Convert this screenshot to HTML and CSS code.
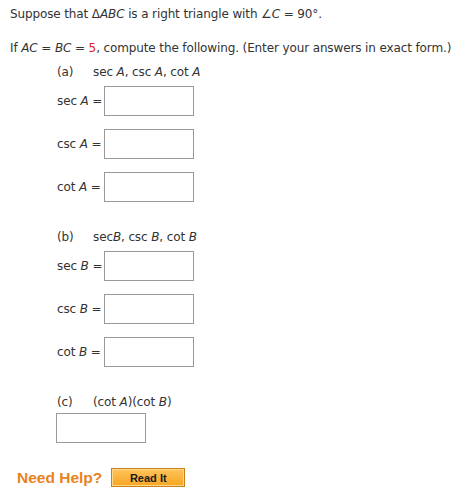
FILE: index.html
```html
<!DOCTYPE html>
<html>
<head>
<meta charset="utf-8">
<link rel="stylesheet" href="styles.css">
</head>
<body>
<div class="page">
  <p class="line first">Suppose that Δ<i>ABC</i> is a right triangle with ∠<i>C</i> = 90°.</p>
  <p class="line second">If <i>AC</i> = <i>BC</i> = <span class="red">5</span>, compute the following. (Enter your answers in exact form.)</p>

  <div class="part">
    <div class="part-head"><span class="tag">(a)</span><span>sec <i>A</i>, csc <i>A</i>, cot <i>A</i></span></div>
    <div class="rows">
      <div class="row"><span class="lbl">sec <i>A</i> =</span><span class="box"></span></div>
      <div class="row"><span class="lbl">csc <i>A</i> =</span><span class="box"></span></div>
      <div class="row"><span class="lbl">cot <i>A</i> =</span><span class="box"></span></div>
    </div>
  </div>

  <div class="part partb">
    <div class="part-head"><span class="tag">(b)</span><span>sec<i>B</i>, csc <i>B</i>, cot <i>B</i></span></div>
    <div class="rows">
      <div class="row"><span class="lbl">sec <i>B</i> =</span><span class="box"></span></div>
      <div class="row"><span class="lbl">csc <i>B</i> =</span><span class="box"></span></div>
      <div class="row"><span class="lbl">cot <i>B</i> =</span><span class="box"></span></div>
    </div>
  </div>

  <div class="part partc">
    <div class="part-head"><span class="tag">(c)</span><span>(cot <i>A</i>)(cot <i>B</i>)</span></div>
    <span class="box boxc"></span>
  </div>

  <div class="help">
    <span class="need">Need Help?</span>
    <span class="btn">Read It</span>
  </div>
</div>
</body>
</html>
```
FILE: styles.css
```css
html, body { margin: 0; padding: 0; background: #fff; }
.page {
  font-family: "DejaVu Sans", Verdana, sans-serif;
  font-size: 12px;
  letter-spacing: -0.12px;
  color: #333;
  padding: 7px 0 0 10px;
}
.line { margin: 0; line-height: 15px; }
.second { margin-top: 19px; }
.red { color: #e0201b; }
.part { margin-left: 47px; }
.part-head { display: flex; line-height: 15px; margin-top: 9px; white-space: nowrap; }
.tag { width: 36px; }
.rows { display: flex; flex-direction: column; gap: 13px; margin-top: 6px; }
.row { display: flex; align-items: center; }
.lbl { width: 47px; flex-shrink: 0; white-space: nowrap; }
.box {
  display: block;
  flex-shrink: 0;
  width: 88px;
  height: 28px;
  border: 1px solid #999;
  background: #fff;
}
.partb .part-head { margin-top: 28px; }
.partb .rows { margin-top: 6px; }
.partc .part-head { margin-top: 28px; }
.boxc { margin-top: 3px; margin-left: -1px; }
.help { display: flex; align-items: center; margin-top: 25px; margin-left: 7px; }
.need {
  font-family: "Liberation Sans", Arial, sans-serif;
  font-weight: bold;
  font-size: 15.5px;
  letter-spacing: 0;
  color: #e8821e;
}
.btn {
  margin-left: 9px;
  width: 72px;
  height: 17px;
  border: 1px solid #c87f1a;
  background: linear-gradient(#ffc45a, #f6a623);
  box-shadow: inset 0 0 0 1px #ffd98a;
  font-family: "Liberation Sans", Arial, sans-serif;
  font-weight: bold;
  font-size: 11px;
  letter-spacing: 0;
  color: #1a1a1a;
  display: flex;
  align-items: center;
  justify-content: center;
}
```
